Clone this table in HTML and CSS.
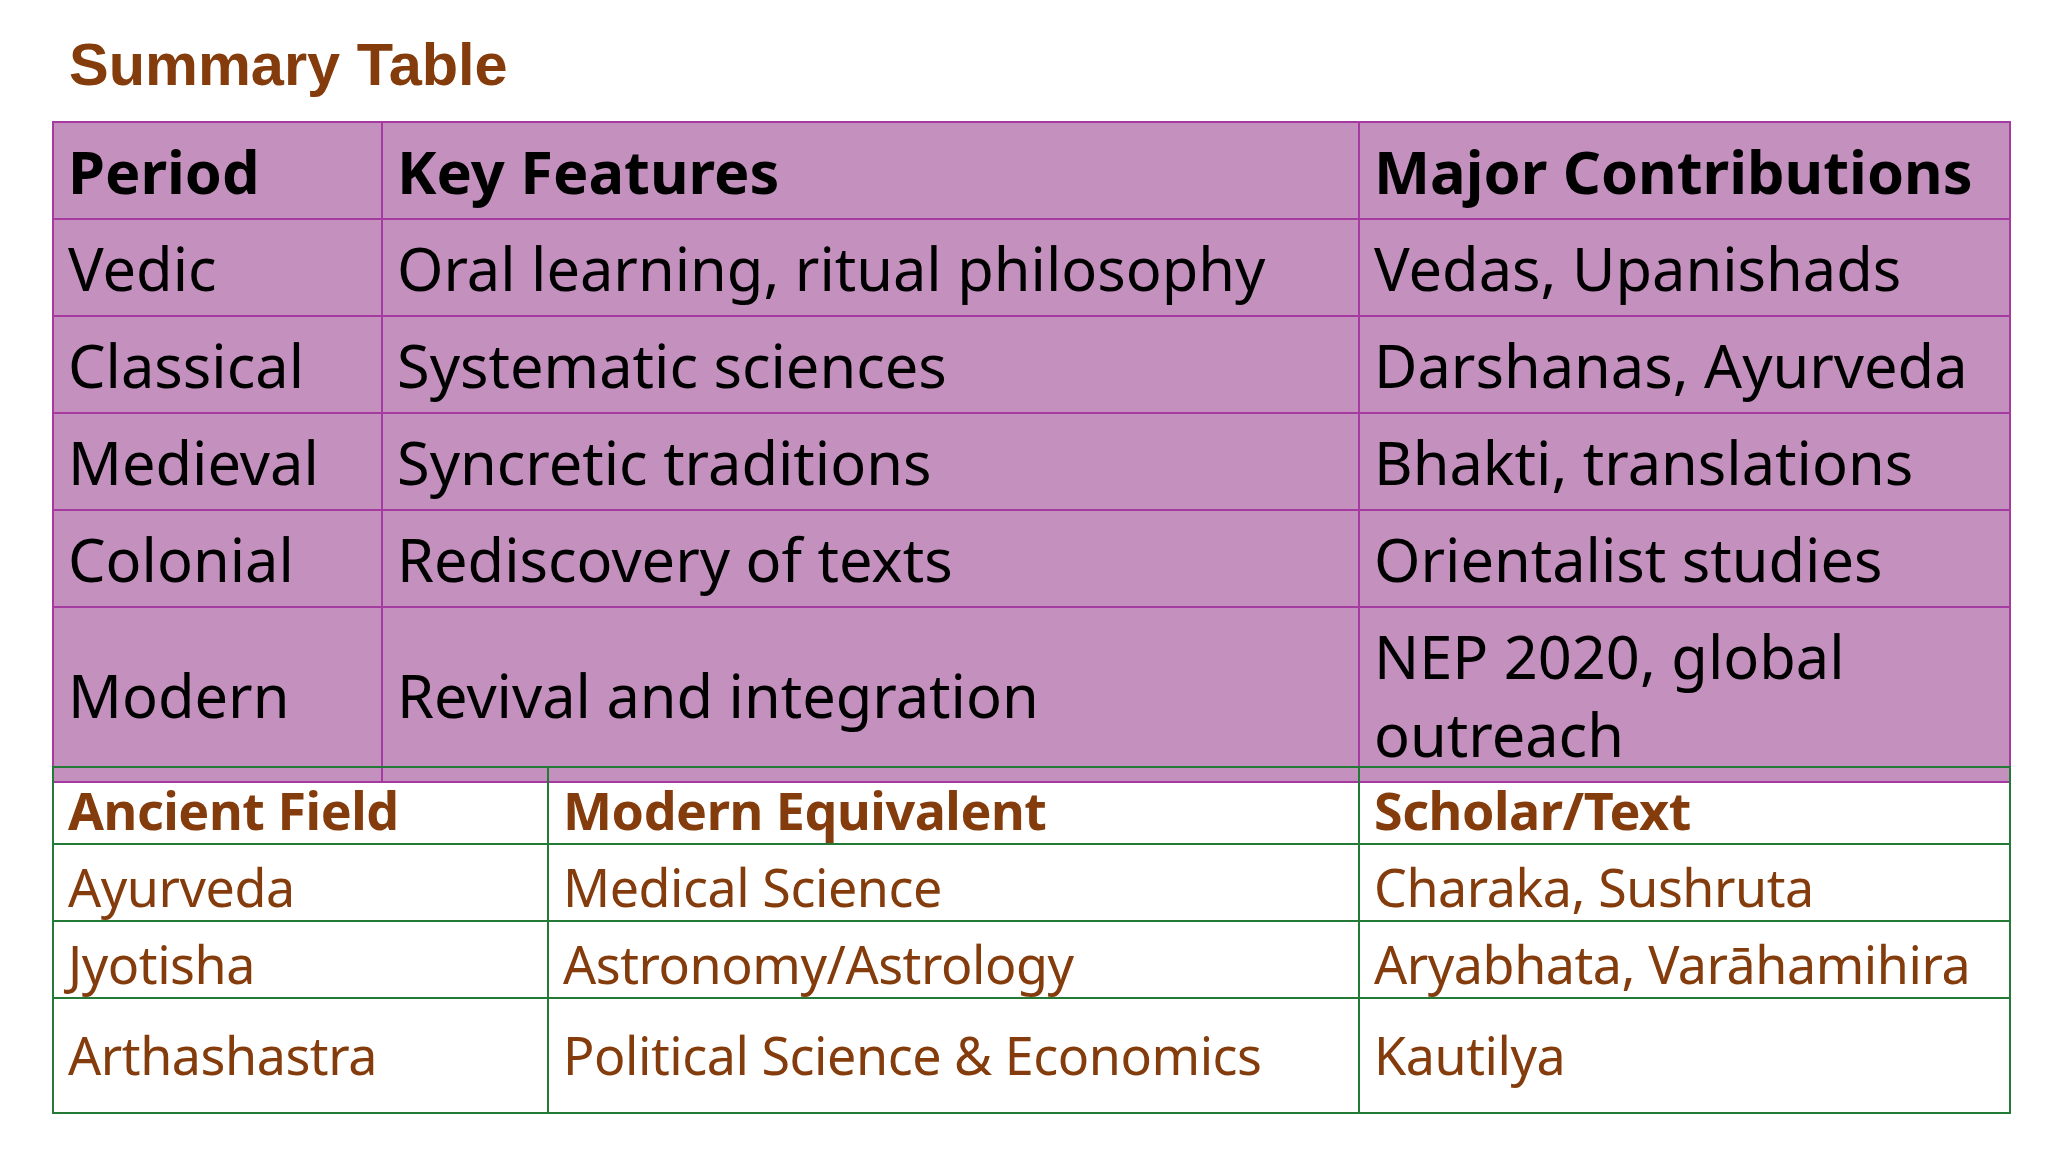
FILE: index.html
```html
<!DOCTYPE html>
<html lang="en">
<head>
<meta charset="utf-8">
<title>Summary Table</title>
<link rel="stylesheet" href="styles.css">
</head>
<body>
<main class="slide">
  <h1 class="title">Summary Table</h1>
  <table class="periods">
    <colgroup><col class="pc1"><col class="pc2"><col class="pc3"></colgroup>
    <thead>
      <tr><th>Period</th><th>Key Features</th><th>Major Contributions</th></tr>
    </thead>
    <tbody>
      <tr><td>Vedic</td><td>Oral learning, ritual philosophy</td><td>Vedas, Upanishads</td></tr>
      <tr><td>Classical</td><td>Systematic sciences</td><td>Darshanas, Ayurveda</td></tr>
      <tr><td>Medieval</td><td>Syncretic traditions</td><td>Bhakti, translations</td></tr>
      <tr><td>Colonial</td><td>Rediscovery of texts</td><td>Orientalist studies</td></tr>
      <tr><td>Modern</td><td>Revival and integration</td><td>NEP 2020, global outreach</td></tr>
    </tbody>
  </table>
  <table class="fields">
    <colgroup><col class="fc1"><col class="fc2"><col class="fc3"></colgroup>
    <thead>
      <tr><th>Ancient Field</th><th>Modern Equivalent</th><th>Scholar/Text</th></tr>
    </thead>
    <tbody>
      <tr><td>Ayurveda</td><td>Medical Science</td><td>Charaka, Sushruta</td></tr>
      <tr><td>Jyotisha</td><td>Astronomy/Astrology</td><td>Aryabhata, Varāhamihira</td></tr>
      <tr class="tall"><td>Arthashastra</td><td>Political Science &amp; Economics</td><td>Kautilya</td></tr>
    </tbody>
  </table>
</main>
</body>
</html>
```

FILE: styles.css
```css
html, body {
  margin: 0;
  padding: 0;
  background: #ffffff;
}

body {
  width: 2048px;
  height: 1152px;
  overflow: hidden;
  font-family: "Noto Sans", "Open Sans", sans-serif;
}

.slide {
  padding: 35px 0 0 52px;
}

.title {
  margin: 0 0 27px 17px;
  font-family: "Liberation Sans", Arial, sans-serif;
  font-weight: 700;
  font-size: 59.5px;
  line-height: 59px;
  color: #843c0c;
}

table {
  border-collapse: collapse;
  table-layout: fixed;
  width: 1957px;
}

th, td {
  text-align: left;
  padding: 0 0 0 14px;
  white-space: normal;
}

/* Purple table */
.periods .pc1 { width: 329px; }
.periods .pc2 { width: 977px; }
.periods .pc3 { width: 651px; }

.periods th,
.periods td {
  background: #c490be;
  border: 2px solid #a53ba0;
  color: #000000;
  font-size: 59.5px;
  line-height: 78px;
  padding-top: 9px;
  padding-bottom: 8px;
  vertical-align: middle;
}

.periods th {
  font-weight: 700;
}

.periods td {
  font-weight: 400;
}

/* Green table */
.fields {
  margin-top: -17px;
}

.fields .fc1 { width: 495px; }
.fields .fc2 { width: 811px; }
.fields .fc3 { width: 651px; }

.fields th,
.fields td {
  background: transparent;
  border: 2px solid #237a36;
  color: #843c0c;
  font-size: 52px;
  letter-spacing: -0.45px;
  line-height: 66px;
  padding-top: 9px;
  padding-bottom: 0;
  height: 66px;
  vertical-align: middle;
}

.fields th {
  font-weight: 700;
}

.fields td {
  font-weight: 400;
}

.fields .tall td {
  height: 94px;
  padding-bottom: 10px;
}
```
